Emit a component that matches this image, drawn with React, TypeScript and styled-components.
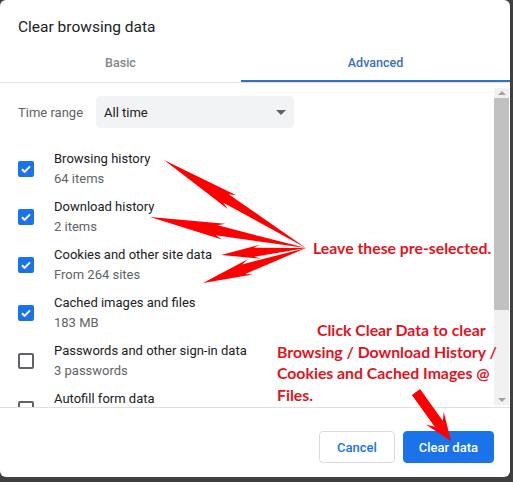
import styled, { createGlobalStyle } from "styled-components";

const GlobalStyle = createGlobalStyle`
  html, body {
    margin: 0;
    padding: 0;
    background: #3f3f3f;
  }
  body {
    font-family: Roboto, "Liberation Sans", sans-serif;
  }
`;

const Card = styled.div`
  position: relative;
  width: 510px;
  height: 477px;
  background: #fff;
  border-radius: 6px;
  display: flex;
  flex-direction: column;
  overflow: hidden;
`;

const Title = styled.h1`
  margin: 0;
  padding: 16px 18px 7px;
  font-size: 15.5px;
  line-height: 22px;
  font-weight: 400;
  color: #202124;
`;

const Tabs = styled.div`
  display: flex;
  border-bottom: 1px solid #e0e0e0;
`;

const Tab = styled.div<{ active?: boolean }>`
  flex: 0 0 ${(p) => (p.active ? "269px" : "241px")};
  height: 35px;
  display: flex;
  align-items: center;
  justify-content: center;
  font-size: 12.5px;
  font-weight: 500;
  color: ${(p) => (p.active ? "#3a6fc4" : "#80868b")};
  border-bottom: 2px solid ${(p) => (p.active ? "#3a6fc4" : "transparent")};
`;

const Body = styled.div`
  flex: 1;
  display: flex;
  min-height: 0;
`;

const List = styled.div`
  flex: 1;
  overflow: hidden;
  padding: 13px 0 0 18px;
`;

const RangeRow = styled.div`
  display: flex;
  align-items: center;
  height: 32px;
  margin-bottom: 16px;
`;

const RangeLabel = styled.span`
  font-size: 13px;
  color: #5f6368;
  width: 78px;
`;

const Select = styled.div`
  width: 198px;
  height: 32px;
  box-sizing: border-box;
  background: #f1f3f4;
  border-radius: 4px;
  padding: 0 8px;
  display: flex;
  align-items: center;
  justify-content: space-between;
  font-size: 13px;
  color: #202124;
`;

const Caret = styled.span`
  width: 0;
  height: 0;
  border-left: 5px solid transparent;
  border-right: 5px solid transparent;
  border-top: 5px solid #5f6368;
`;

const Row = styled.div`
  display: flex;
  align-items: center;
  gap: 20px;
  height: 48px;
  padding-top: 1px;
  box-sizing: border-box;
`;

const Box = styled.span<{ checked?: boolean }>`
  flex: 0 0 auto;
  width: 16px;
  height: 16px;
  box-sizing: border-box;
  border-radius: 2px;
  background: ${(p) => (p.checked ? "#1a73e8" : "#fff")};
  border: ${(p) => (p.checked ? "none" : "2px solid #5f6368")};
  display: flex;
  align-items: center;
  justify-content: center;
`;

const Texts = styled.div`
  display: flex;
  flex-direction: column;
  font-size: 13px;
  line-height: 20px;
`;

const Primary = styled.span`
  color: #202124;
`;

const Secondary = styled.span`
  color: #5f6368;
  min-height: 20px;
`;

const Track = styled.div`
  flex: 0 0 15px;
  margin: 5px 1px 2px 0;
  background: #f1f1f1;
  display: flex;
  flex-direction: column;
  align-items: center;
`;

const TrackArrow = styled.span<{ down?: boolean }>`
  flex: 0 0 10px;
  display: flex;
  align-items: center;
  &::before {
    content: "";
    border-left: 4px solid transparent;
    border-right: 4px solid transparent;
    ${(p) => (p.down ? "border-top" : "border-bottom")}: 4px solid #a3a3a3;
  }
`;

const Thumb = styled.div`
  width: 15px;
  height: 212px;
  background: #c1c1c1;
`;

const TrackRest = styled.div`
  flex: 1;
`;

const Footer = styled.div`
  flex: 0 0 auto;
  border-top: 1px solid #e0e0e0;
  padding: 23px 16px 14px;
  display: flex;
  justify-content: flex-end;
  gap: 8px;
`;

const Button = styled.button<{ primary?: boolean }>`
  height: 32px;
  padding: 0 ${(p) => (p.primary ? "15px" : "17px")};
  border-radius: 4px;
  font-family: Roboto, "Liberation Sans", sans-serif;
  font-size: 13px;
  font-weight: 500;
  cursor: pointer;
  color: ${(p) => (p.primary ? "#fff" : "#1a73e8")};
  background: ${(p) => (p.primary ? "#1a73e8" : "#fff")};
  border: 1px solid ${(p) => (p.primary ? "#1a73e8" : "#dadce0")};
`;

const Overlay = styled.svg`
  position: absolute;
  left: 0;
  top: 0;
  pointer-events: none;
`;

const Note = styled.div<{ x: number; y: number }>`
  position: absolute;
  left: ${(p) => p.x}px;
  top: ${(p) => p.y}px;
  font-family: Lato, "Liberation Sans", sans-serif;
  font-weight: 700;
  font-size: 15.8px;
  line-height: 21.7px;
  color: #e0141e;
  white-space: nowrap;
`;

const Indent = styled.span`
  padding-left: 40px;
`;

type Pt = [number, number];

function arrow(tip: Pt, tail: Pt, headLen: number, headHalf: number, shaftHalf: number, pointed: boolean) {
  const dx = tail[0] - tip[0];
  const dy = tail[1] - tip[1];
  const len = Math.hypot(dx, dy);
  const u = [dx / len, dy / len];
  const n = [-u[1], u[0]];
  const p = (t: number, w: number) =>
    `${(tip[0] + u[0] * t + n[0] * w).toFixed(1)},${(tip[1] + u[1] * t + n[1] * w).toFixed(1)}`;
  const notch = headLen - 7;
  const pts = [p(0, 0), p(headLen, headHalf), p(notch, shaftHalf)];
  if (pointed) pts.push(p(len, 0));
  else pts.push(p(len, shaftHalf), p(len, -shaftHalf));
  pts.push(p(notch, -shaftHalf), p(headLen, -headHalf));
  return pts.join(" ");
}

const items = [
  { title: "Browsing history", sub: "64 items", checked: true },
  { title: "Download history", sub: "2 items", checked: true },
  { title: "Cookies and other site data", sub: "From 264 sites", checked: true },
  { title: "Cached images and files", sub: "183 MB", checked: true },
  { title: "Passwords and other sign-in data", sub: "3 passwords", checked: false },
  { title: "Autofill form data", sub: "", checked: false },
];

const hub: Pt = [306, 248];
const arrows = [
  arrow([164, 160], hub, 80, 8, 5, true),
  arrow([150, 217], hub, 75, 8, 5, true),
  arrow([221, 255], hub, 40, 7, 4.5, true),
  arrow([203, 283], hub, 50, 8, 5, true),
  arrow([451, 441], [416, 392], 28, 11, 5, false),
];

export default function App() {
  return (
    <>
      <GlobalStyle />
      <Card>
        <Title>Clear browsing data</Title>
        <Tabs>
          <Tab>Basic</Tab>
          <Tab active>Advanced</Tab>
        </Tabs>
        <Body>
          <List>
            <RangeRow>
              <RangeLabel>Time range</RangeLabel>
              <Select>
                All time
                <Caret />
              </Select>
            </RangeRow>
            {items.map((it) => (
              <Row key={it.title}>
                <Box checked={it.checked}>
                  {it.checked && (
                    <svg width="12" height="12" viewBox="0 0 12 12">
                      <path d="M2 6.3l2.6 2.6L10 3.4" fill="none" stroke="#fff" strokeWidth="2" />
                    </svg>
                  )}
                </Box>
                <Texts>
                  <Primary>{it.title}</Primary>
                  <Secondary>{it.sub}</Secondary>
                </Texts>
              </Row>
            ))}
          </List>
          <Track>
            <TrackArrow />
            <Thumb />
            <TrackRest />
            <TrackArrow down />
          </Track>
        </Body>
        <Footer>
          <Button>Cancel</Button>
          <Button primary>Clear data</Button>
        </Footer>
        <Overlay width="510" height="477">
          {arrows.map((pts, i) => (
            <polygon key={i} points={pts} fill="#ff0000" />
          ))}
        </Overlay>
        <Note x={313} y={237}>Leave these pre-selected.</Note>
        <Note x={277} y={319}>
          <Indent>Click Clear Data to clear</Indent>
          <br />
          Browsing / Download History /
          <br />
          Cookies and Cached Images @
          <br />
          Files.
        </Note>
      </Card>
    </>
  );
}
